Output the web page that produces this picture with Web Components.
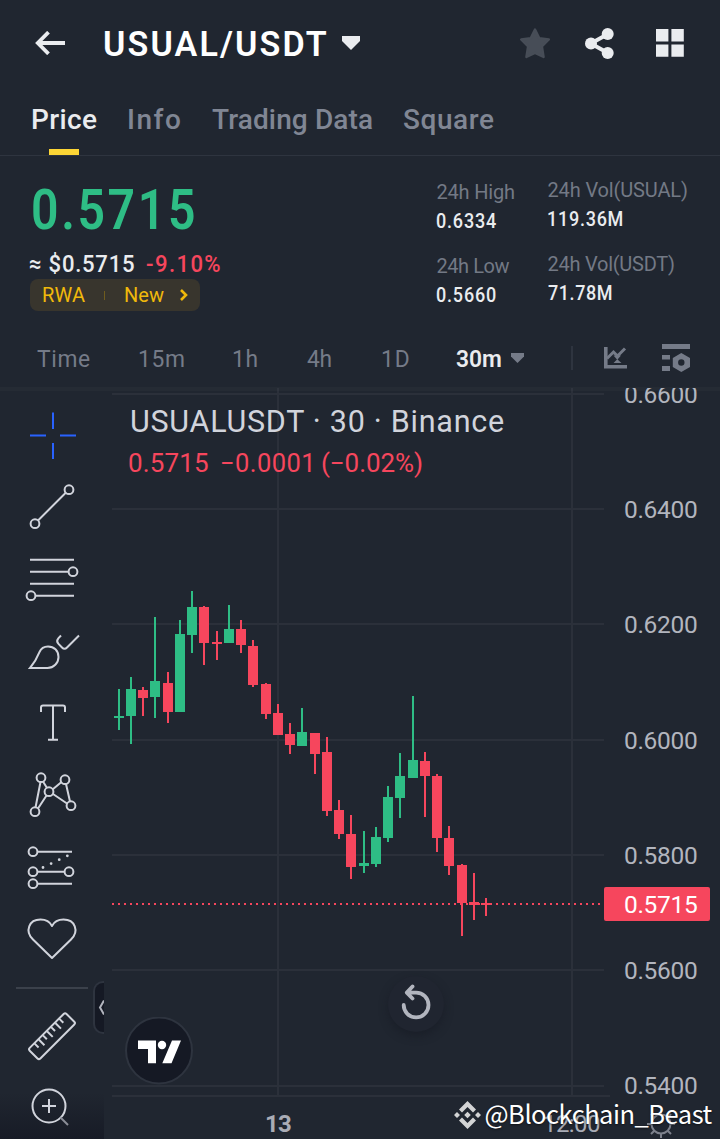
<!DOCTYPE html>
<html lang="en">
<head>
<meta charset="utf-8">
<title>USUAL/USDT</title>
<style>
html,body{margin:0;padding:0;background:#202630}
body{width:720px;height:1139px;overflow:hidden;font-family:Roboto,"Liberation Sans",sans-serif;color:#eaecef}
</style>
</head>
<body>
<trade-page></trade-page>
<script>
const define = (name, html, setup) => {
  const t = document.createElement('template');
  t.innerHTML = html;
  customElements.define(name, class extends HTMLElement {
    constructor() { super(); this.attachShadow({mode: 'open'}).appendChild(t.content.cloneNode(true)); }
    connectedCallback() { if (setup) setup.call(this, this.shadowRoot); }
  });
};

/* One line of text, tracked so that its ink spans exactly `w` pixels; `sx` condenses the glyphs. */
const ctx = document.createElement('canvas').getContext('2d');
define('fit-label', `<style>
  :host{display:block;flex:none;white-space:pre}
  span{display:block;white-space:pre}
</style><span><slot></slot></span>`, function (root) {
  const w = +this.getAttribute('w'), size = +this.getAttribute('size');
  const sx = +(this.getAttribute('sx') || 1);
  const weight = this.getAttribute('weight') || 400;
  const family = this.getAttribute('family') || 'Roboto';
  const text = this.textContent, span = root.querySelector('span');
  ctx.font = `${weight} ${size}px "${family}"`;
  const m = ctx.measureText(text);
  const left = m.actualBoundingBoxLeft, ink = left + m.actualBoundingBoxRight;
  this.style.width = w + 'px';
  span.style.cssText = `font:${weight} ${size}px/${this.getAttribute('lh') || Math.round(size * 1.2)}px "${family}","Liberation Sans",sans-serif;` +
    `letter-spacing:${(w / sx - ink) / (text.length - 1)}px;margin-left:${left * sx}px;margin-right:-40px` +
    (sx === 1 ? '' : `;transform:scaleX(${sx});transform-origin:0 0`);
});

define('top-bar', `<style>
  :host{display:flex;align-items:center;height:87px;box-sizing:border-box;padding:1px 36px 0 35px}
  svg{display:block;flex:none}
  .back{margin:-2px 40px 0 0}.caret{margin:-3px 160px 0 15px}.share{margin:0 42px 0 35px}
  .star,.share,.grid{position:relative;top:-1px}
  fit-label{color:#fff}
</style>
<svg class="back" width="30" height="24" viewBox="0 0 30 24" fill="none" stroke="#eaecef" stroke-width="3.8"><path d="M2.5 12H30M13.5 1.2L2.8 12 13.5 22.8"/></svg>
<fit-label w="222" size="35.5" weight="600" sx=".96">USUAL/USDT</fit-label>
<svg class="caret" width="18" height="14" viewBox="0 0 18 14"><path d="M0 0H18V5L9 14 0 5Z" fill="#eaecef"/></svg>
<svg class="star" width="30" height="31" viewBox="0 0 30 31"><path d="M15 1.5L19.3 10.2 28.8 11.5 21.9 18.3 23.6 29 15 24.8 6.4 29 8.1 18.3 1.2 11.5 10.7 10.2Z" fill="#474d57" stroke="#474d57" stroke-width="2.4" stroke-linejoin="round"/></svg>
<svg class="share" width="29" height="31" viewBox="0 0 29 31"><path d="M22.5 6.2L5.8 15.4 22.5 24.8" fill="none" stroke="#eaecef" stroke-width="4"/><g fill="#eaecef"><circle cx="6" cy="15.4" r="6"/><circle cx="22.7" cy="6" r="6"/><circle cx="22.7" cy="25" r="6"/></g></svg>
<svg class="grid" width="28" height="28" viewBox="0 0 28 28" fill="#eaecef"><path d="M0 0h12.4v12.4H0zM15.4 0h12.4v12.4H15.4zM0 15.4h12.4v12.4H0zM15.4 15.4h12.4v12.4H15.4z"/></svg>`);

define('tab-item', `<style>
  :host{display:flex;flex-direction:column;align-items:center;justify-content:space-between;color:#808694}
  i{display:block;width:30px;height:6px;margin-left:-2px}
  :host([active]){color:#eaecef}:host([active]) i{background:#fcd535}
</style><slot></slot><i></i>`);
define('tab-strip', `<style>
  :host{display:flex;gap:32px;height:69px;box-sizing:border-box;padding:16px 32px 0 33px;border-bottom:1px solid #2e343f}
</style><slot></slot>`);

define('stat-cell', `<style>
  :host{display:flex;flex-direction:column;gap:5px;color:#737985}
  ::slotted([slot=value]){color:#eaecef}
</style><slot name="label"></slot><slot name="value"></slot>`);
define('price-panel', `<style>
  :host{display:flex;height:170px;box-sizing:border-box;padding:19px 32px 0 30px}
  .main{width:406.5px}
  .big{color:#2ebd85;margin-left:3px}
  .row{display:flex;gap:12px;margin-top:5px}
  .down{color:#f6465d}
  .pill{display:flex;align-items:center;width:170px;height:32px;box-sizing:border-box;padding:0 12px 0 13px;border-radius:8px;background:#38352d;color:#f0b90b}
  .pill i{width:1px;height:9px;background:#6f5c1e;margin:0 20px 0 19px}
  .pill svg{margin-left:16px}
  .stats{display:flex;gap:34px}
  .col{display:flex;flex-direction:column;gap:21px;padding-top:5px;width:77px}
  .col+.col{padding-top:3px;width:140px}
</style>
<div class="main">
  <fit-label class="big" w="161" size="56" weight="600" lh="70" sx=".86">0.5715</fit-label>
  <div class="row"><fit-label w="104" size="24" weight="500" sx=".92">≈ $0.5715</fit-label><fit-label class="down" w="74" size="24" weight="500" sx=".92">-9.10%</fit-label></div>
  <div class="pill"><fit-label w="42" size="20">RWA</fit-label><i></i><fit-label w="39" size="20">New</fit-label><svg width="8" height="12" viewBox="0 0 8 12" fill="none" stroke="#f0b90b" stroke-width="2.6"><path d="M1 1L6 6 1 11"/></svg></div>
</div>
<div class="stats">
  <div class="col">
    <stat-cell><fit-label slot="label" w="77.5" size="20">24h High</fit-label><fit-label slot="value" w="59" size="20" weight="500" sx=".9">0.6334</fit-label></stat-cell>
    <stat-cell><fit-label slot="label" w="73" size="20">24h Low</fit-label><fit-label slot="value" w="59" size="20" weight="500" sx=".9">0.5660</fit-label></stat-cell>
  </div>
  <div class="col">
    <stat-cell><fit-label slot="label" w="139.5" size="20">24h Vol(USUAL)</fit-label><fit-label slot="value" w="75" size="20" weight="500" sx=".9">119.36M</fit-label></stat-cell>
    <stat-cell><fit-label slot="label" w="126.5" size="20">24h Vol(USDT)</fit-label><fit-label slot="value" w="64" size="20" weight="500" sx=".9">71.78M</fit-label></stat-cell>
  </div>
</div>`);

define('interval-bar', `<style>
  :host{display:flex;align-items:center;height:62px;box-sizing:border-box;padding:4px 0 0 36.500px;color:#757b88}
  svg{display:block;flex:none}
  .a{margin-left:50px}.a.first{margin-left:51px}.on{color:#eaecef;margin-left:46.500px}
  .caret{margin:-3px 47px 0 10px}
  i{flex:none;width:2px;height:24px;background:#2e343f;margin:-3px 31px 0 0}
  .k{margin:-3px 35px 0 0}.s{margin-top:-3px}
</style>
<fit-label w="52.500" size="24" sx=".95">Time</fit-label><fit-label class="a first" w="44" size="24" sx=".95">15m</fit-label><fit-label class="a" w="23" size="24" sx=".95">1h</fit-label><fit-label class="a" w="24" size="24" sx=".95">4h</fit-label><fit-label class="a" style="margin-left:52px" w="26" size="24" sx=".95">1D</fit-label><fit-label class="on" w="45" size="24" weight="600" sx=".95">30m</fit-label>
<svg class="caret" width="13" height="10" viewBox="0 0 13 10"><path d="M0 0H13V3.5L6.5 10 0 3.5Z" fill="#757b88"/></svg><i></i>
<svg class="k" width="23" height="22" viewBox="0 0 23 22" fill="none" stroke="#757b88" stroke-width="3.600"><path d="M1.8 0V19.700H23"/><path d="M3 11.500L9.500 5 13.500 9 21 1.500" stroke-width="3"/><path d="M9.500 8.500H17L13.500 12.500 17.500 16H9.500L13 12.500Z" fill="#757b88" stroke="none"/></svg>
<svg class="s" width="28" height="28" viewBox="0 0 28 28" fill="#757b88"><path d="M0 0H28V5H0zM0 11H8V15.500H0zM0 22H8V27H0z"/><path fill-rule="evenodd" d="M19.300 9L28 14V23L19.300 28 10.800 23V14ZM19.300 15.300A3.200 3.200 0 1 0 19.300 21.700A3.200 3.200 0 1 0 19.300 15.300Z"/></svg>`);

define('tool-rail', `<style>
  :host{display:block;position:relative;width:104px;height:751px;box-sizing:border-box;padding-top:12px;
    background:linear-gradient(#0000 705px,#171b26 751px)}
  svg{display:block;width:104px;height:72px;fill:none;stroke:#d1d4dc;stroke-width:2}
  hr{width:72px;height:2px;border:0;margin:11px 16px 10px;background:#3b414b}
  .handle{position:absolute;right:0;top:593px;width:11px;height:53px;box-sizing:border-box;border:2px solid #2e343f;border-right:0;border-radius:10px 0 0 10px;background:#151924}
  .handle svg{width:9px;height:49px;stroke:#b2b5be}
</style>
<svg viewBox="0 400 104 72" style="stroke:#2962ff"><path d="M53 412.500V429M53 443V459M30 435.500H46M60 435.500H76"/></svg>
<svg viewBox="0 472 104 72"><circle cx="35" cy="523.7" r="4.400"/><circle cx="69" cy="489.7" r="4.400"/><path d="M38 520.5L66 492.500"/></svg>
<svg viewBox="0 544 104 72"><path d="M30 559.7H74M30 571.7H68.500M30 583.7H74M35.500 595.7H74"/><circle cx="73" cy="571.7" r="4.400"/><circle cx="31" cy="595.7" r="4.400"/></svg>
<svg viewBox="0 616 104 72"><path d="M30 668H47.500A11 11 0 0 0 58.500 657C58.500 650.500 54 646.500 48 646.500C43.500 646.500 41 648.500 39.500 652C37.500 657 36 661 30 668ZM61 635.500L58.300 638.300Q56 641 58.300 643.700L62 647.500Q64.500 650 67 647.500L79 635.500"/></svg>
<svg viewBox="0 688 104 72"><path d="M41 712V707.500Q41 705.500 43 705.500H63Q65 705.500 65 707.500V712M53 705.500V740M48 739.700H58"/></svg>
<svg viewBox="0 760 104 72"><circle cx="41" cy="777.7" r="4.400"/><circle cx="65" cy="779.7" r="4.400"/><circle cx="49" cy="791.7" r="4.400"/><circle cx="35" cy="811.7" r="4.400"/><circle cx="71" cy="805.7" r="4.400"/><path d="M40.500 782L35.500 807.500M43 781.500L47 788M52.500 789.500L61.500 782M66 784L70 801.500M53 794L67 803.500M46.500 795.500L38 808.500"/></svg>
<svg viewBox="0 832 104 72"><circle cx="33" cy="851.7" r="4.400"/><circle cx="33" cy="871.7" r="4.400"/><circle cx="69" cy="871.7" r="4.400"/><circle cx="33" cy="883.7" r="4.400"/><path d="M37.500 851.7H72M37.500 871.7H64.500M37.500 883.7H72"/><path d="M43 867.500L68 855.500" stroke-width="2.800" stroke-dasharray="0 9" stroke-linecap="round"/></svg>
<svg viewBox="0 904 104 72"><path stroke-linejoin="round" d="M52 958L33 939.500C24.500 931 29 919.500 40.500 919.500C46 919.500 50 922 52 926C54 922 58 919.500 63.500 919.500C75 919.500 79.500 931 71 939.500Z"/></svg>
<hr>
<svg viewBox="0 999.500 104 72"><g transform="translate(52 1036.700) rotate(-45)"><rect x="-26" y="-7.500" width="52" height="15" rx="2"/><path d="M-17.500-7v5.500M-11.700-7v8M-5.800-7v5.500M0-7v8M5.800-7v5.500M11.700-7v8M17.500-7v5.500"/></g></svg>
<svg viewBox="0 1071 104 72"><circle cx="49" cy="1106" r="16.500"/><path d="M42 1106H56M49 1099V1113"/><path d="M60.500 1117.500L68 1125" stroke="#8b8e98"/></svg>
<div class="handle"><svg viewBox="0 0 9 49"><path d="M9 17.500L5 24.500 9 31.500"/></svg></div>`);

define('candle-plot', `<style>:host{display:block}svg{display:block}</style>
<svg width="498" height="709" viewBox="112 388 498 709" shape-rendering="crispEdges"></svg>`, function (root) {
  const up = '#2ebd85', down = '#f6465d';
  /* centre x, rising, body top, body bottom, wick top, wick bottom */
  const candles = [[119,1,716,718,689,730],[131,1,689,716,677,744],[143,0,690,698,687,716],[155,1,681,697,617,718],[168,0,683,712,672,723],[180,1,634,712,620,712],[192,1,607,635,591,653],[204,0,607,643,606,665],[217,0,642,644,631,660],[229,1,629,643,605,643],[241,0,629,645,620,653],[253,0,646,685,640,687],[266,0,684,714,683,719],[278,0,713,735,704,735],[290,0,734,745,723,754],[302,1,732,746,708,746],[315,0,733,754,733,774],[327,0,752,811,737,816],[339,0,810,834,800,839],[351,0,834,867,815,879],[364,1,863,866,831,873],[376,1,837,864,827,867],[388,1,797,838,786,842],[400,1,776,798,753,818],[413,1,760,778,696,778],[425,0,761,776,752,817],[437,0,776,838,774,852],[449,0,838,866,826,875],[462,0,865,903,864,936],[474,0,902,905,873,920],[486,0,903,905,898,916]];
  let s = '<g fill="#2b303a">';
  for (const y of [393,508,623,739,854,969,1085]) s += `<rect x="112" y="${y}" width="492" height="2"/>`;
  for (const x of [277,571]) s += `<rect x="${x}" y="388" width="2" height="707"/>`;
  s += '<rect x="112" y="1095" width="498" height="2"/></g>';
  s += `<path d="M112 904H604" stroke="${down}" stroke-width="2" stroke-dasharray="2 4"/>`;
  for (const [x, g, a, b, c, d] of candles)
    s += `<g fill="${g ? up : down}"><rect x="${x-1}" y="${c}" width="2" height="${d-c}"/><rect x="${x-5}" y="${a}" width="10" height="${b-a}"/></g>`;
  root.querySelector('svg').innerHTML = s;
});

define('price-scale', `<style>
  :host{display:block;position:relative;width:116px;height:708px;overflow:hidden;color:#b2b5be}
  .labels{display:flex;flex-direction:column;gap:85.200px;padding:0 0 0 21px;margin-top:-8px}
  .tag{position:absolute;left:0;top:499px;width:106px;height:34px;box-sizing:border-box;padding:3px 0 0 21px;border-radius:2px;background:#f6465d;color:#fff}
</style>
<div class="labels"></div><div class="tag"><fit-label w="72" size="24.500" lh="30">0.5715</fit-label></div>`, function (root) {
  root.querySelector('.labels').innerHTML = ['0.6600','0.6400','0.6200','0.6000','0.5800','0.5600','0.5400']
    .map(v => `<fit-label w="72" size="24.500" lh="30">${v}</fit-label>`).join('');
});

define('time-scale', `<style>
  :host{display:flex;align-items:center;height:43px;box-sizing:border-box;padding:13px 46px 0 154px;color:#a9acb6}
  svg{display:block;margin-left:47px;flex:none}
</style>
<fit-label w="25" size="24" weight="700">13</fit-label><fit-label style="margin-left:254px" w="55" size="24">12:00</fit-label>
<svg width="28" height="28" viewBox="0 0 28 28" fill="none" stroke="#7d818c" stroke-width="2"><circle cx="14" cy="14" r="9.500"/><path d="M14 0v4.500M14 23.500v5M0 14h4.500M23.500 14h5M4 4l3.300 3.300M20.700 20.700L24 24M24 4l-3.300 3.300M7.300 20.700L4 24"/></svg>`);

define('chart-pane', `<style>
  :host{display:block;position:relative;width:608px;height:751px;margin-left:8px}
  .plot{display:grid;grid-template-columns:492px 116px;height:708px}
  candle-plot{width:492px}
  .legend{position:absolute;left:17px;top:16px;color:#d1d4dc}
  .legend>fit-label{margin-left:3px}
  .quote{display:flex;color:#f6465d;margin-top:6px}
  .change{margin-left:14px}.percent{margin-left:11px}
  .logo{position:absolute;left:13px;top:629px}
  .reset{position:absolute;left:276px;top:588px;width:56px;height:56px;border-radius:50%;background:#202530;box-shadow:0 4px 8px #14182288}
  svg{display:block}
</style>
<div class="plot"><candle-plot></candle-plot><price-scale></price-scale></div>
<time-scale></time-scale>
<div class="legend"><fit-label w="372.500" size="30.500" lh="36">USUALUSDT · 30 · Binance</fit-label>
<div class="quote"><fit-label w="79" size="26" lh="35">0.5715</fit-label><fit-label class="change" w="89" size="26" lh="35" sx=".98">−0.0001</fit-label><fit-label class="percent" w="100" size="26" lh="35">(−0.02%)</fit-label></div></div>
<svg class="logo" width="68" height="68" viewBox="125 1016.500 68 68"><circle cx="159" cy="1050" r="33" fill="#151924" stroke="#2e343f" stroke-width="2"/><path fill="#fff" d="M138 1040H156V1062.700H148V1048.500H138ZM172 1040H181L171.500 1062.700H162.300Z"/><circle cx="162" cy="1044.500" r="4.200" fill="#fff"/></svg>
<div class="reset"><svg width="56" height="56" viewBox="388 976 56 56" fill="none" stroke="#b2b5be" stroke-width="3.800" stroke-linecap="round" stroke-linejoin="round"><path d="M403.700 1005A12.400 12.400 0 1 0 416 992.600H407M412.500 986.500L406.800 992.600 412.500 998.500"/></svg></div>`);

define('water-mark', `<style>
  :host{display:flex;align-items:center;gap:5px;position:absolute;left:453.500px;top:1095px;height:36px;color:#fff;text-shadow:0 1px 2px #0008}
  svg{display:block;margin-top:4px}
</style>
<svg width="27" height="28" viewBox="0 0 27 28" fill="#d3d4d5"><path d="M13.500 0L22 8.500 19 11.500 13.500 6 8 11.500 5 8.500ZM13.500 28L22 19.500 19 16.500 13.500 22 8 16.500 5 19.500ZM3 11L6 14 3 17 0 14ZM24 11L27 14 24 17 21 14ZM13.500 10.700L16.800 14 13.500 17.300 10.200 14Z"/></svg>
<fit-label w="227" size="25.500" family="Noto Sans CJK SC" lh="36">@Blockchain_Beast</fit-label>`);

define('trade-page', `<style>
  :host{display:block;position:relative;width:720px;height:1139px;overflow:hidden;background:#202630}
  .chart{display:flex;height:751px}
  .edge{position:absolute;left:0;top:387px;width:720px;height:4px;background:#ffffff06}
</style>
<top-bar></top-bar>
<tab-strip>
  <tab-item active><fit-label w="64" size="28" weight="500">Price</fit-label></tab-item>
  <tab-item><fit-label w="51" size="28" weight="500">Info</fit-label></tab-item>
  <tab-item><fit-label w="160" size="28" weight="500">Trading Data</fit-label></tab-item>
  <tab-item><fit-label w="90" size="28" weight="500">Square</fit-label></tab-item>
</tab-strip>
<price-panel></price-panel>
<interval-bar></interval-bar>
<div class="chart"><tool-rail></tool-rail><chart-pane></chart-pane></div>
<div class="edge"></div>
<water-mark></water-mark>`);
</script>
</body>
</html>
